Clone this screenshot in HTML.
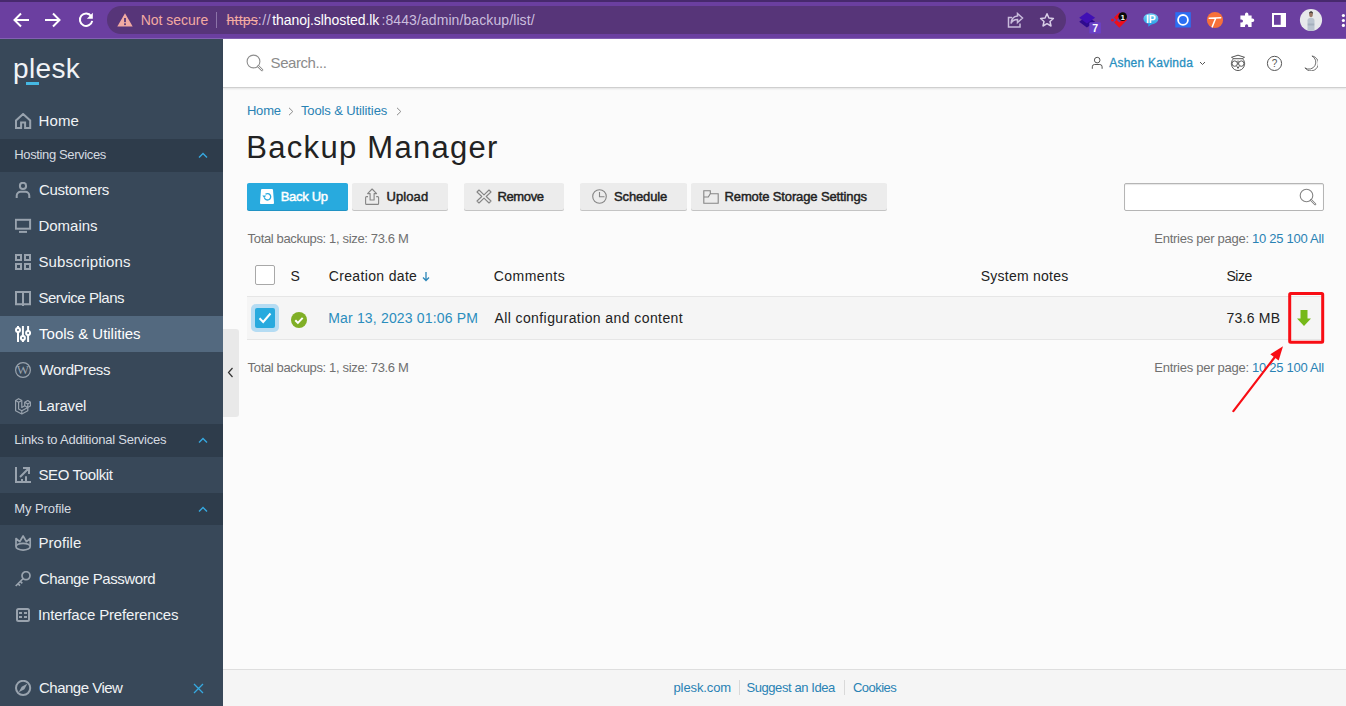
<!DOCTYPE html>
<html><head><meta charset="utf-8">
<style>
*{box-sizing:border-box;margin:0;padding:0}
html,body{width:1346px;height:706px;overflow:hidden;background:#fbfbfb;font-family:"Liberation Sans",sans-serif;}
.abs{position:absolute}
.t{position:absolute;white-space:nowrap}
#chrome{position:absolute;left:0;top:0;width:1346px;height:39px;background:#6b3fa0;}
#chrome .topstrip{position:absolute;left:0;top:0;width:1346px;height:2px;background:#47296d}
#chrome .botline{position:absolute;left:0;top:38px;width:1346px;height:1px;background:#8460b3}
#pill{position:absolute;left:107px;top:6px;width:959px;height:28px;border-radius:14px;background:#573579}
#side{position:absolute;left:0;top:39px;width:223px;height:667px;background:#384859}
.sec{position:absolute;left:0;width:223px;height:33px;background:#2e3c4b}
.act{position:absolute;left:0;width:223px;height:36px;background:#53697f}
.ic{position:absolute;fill:none;stroke:#99a3ae;stroke-width:2}
.chev{position:absolute;left:198px;fill:none;stroke:#36a9e0;stroke-width:1.4}
#hdr{position:absolute;left:223px;top:39px;width:1123px;height:49px;background:#fff;border-bottom:1px solid #cfcfcf;box-shadow:0 1px 2px rgba(0,0,0,.10)}
.btn{position:absolute;top:183px;height:27px;background:#ececec;border-radius:2px;box-shadow:0 1px 0 #c4c4c4}
.btn.pri{background:#28aade;box-shadow:none}
.gi{position:absolute;fill:none;stroke:#858585;stroke-width:1.1}
</style></head><body>

<div id="chrome">
  <div class="topstrip"></div><div class="botline"></div>
  <div id="pill"></div>
</div>
<div id="side"></div>
<div id="hdr"></div>

<!-- chrome icons -->
<svg class="abs" style="left:11px;top:11px" width="20" height="18" viewBox="0 0 20 18" fill="none" stroke="#fff" stroke-width="2"><path d="M18 9H4M10 2.500L3.500 9l6.500 6.500"/></svg>
<svg class="abs" style="left:43px;top:11px" width="20" height="18" viewBox="0 0 20 18" fill="none" stroke="#fff" stroke-width="2"><path d="M2 9h14M10 2.500L16.500 9 10 15.500"/></svg>
<svg class="abs" style="left:77px;top:11px" width="18" height="18" viewBox="0 0 18 18" fill="none" stroke="#fff" stroke-width="2"><path d="M14.200 5.200A6.200 6.200 0 1 0 15.200 9.800"/><path d="M15.800 1.800v6h-6z" fill="#fff" stroke="none"/></svg>
<svg class="abs" style="left:117px;top:13px" width="16" height="14" viewBox="0 0 16 14"><path d="M8 0.300L15.700 13.600H0.300z" fill="#f2aaa2"/><rect x="7.100" y="5" width="1.800" height="4.200" fill="#573579"/><rect x="7.100" y="10.300" width="1.800" height="1.800" fill="#573579"/></svg>
<div class="abs" style="left:216px;top:12px;width:1px;height:16px;background:#8c73a8"></div>
<!-- share -->
<svg class="abs" style="left:1007px;top:12px" width="17" height="16" viewBox="0 0 17 16" fill="none" stroke="#c9bcdc" stroke-width="1.500"><path d="M5 5.500H1.500v9.500h11.500v-3.500"/><path d="M10.500 1.500l5 4.500-5 4.500v-3c-3.500 0-5.500 1.500-6.500 4 0-4 2.500-7.500 6.500-7.500z"/></svg>
<!-- star -->
<svg class="abs" style="left:1039px;top:12px" width="16" height="16" viewBox="0 0 16 16" fill="none" stroke="#d8cde6" stroke-width="1.500" stroke-linejoin="round"><path d="M8 1.800l1.900 4.200 4.500.500-3.400 3 1 4.500L8 11.700 4 14l1-4.500-3.400-3 4.500-.500z"/></svg>
<!-- ext1 layers -->
<svg class="abs" style="left:1078px;top:11px" width="24" height="24" viewBox="0 0 24 24"><path d="M8.900 5.200L17.100 10.800 8.900 16.400 1.200 10.800z" fill="#2e0b8e"/><path d="M8.900 1.200L17.100 6.800 8.900 12.400 1.200 6.800z" fill="#4010b4"/><rect x="11.300" y="11.200" width="11.600" height="11.400" rx="1.200" fill="#6a41c6"/><text x="17.100" y="21" font-family="Liberation Sans,sans-serif" font-size="10.500" font-weight="bold" fill="#fff" text-anchor="middle">7</text></svg>
<!-- ext2 red tag -->
<svg class="abs" style="left:1110px;top:11px" width="20" height="18" viewBox="0 0 20 18"><path d="M9.300 1.200L17 8.900 9.300 16.700 4 11.300 6.400 8.900 4 6.500z" fill="#ee0f1a"/><path d="M9.300 6.300L12 8.900 9.300 11.600 6.700 8.900z" fill="#6b3fa0"/><circle cx="2.500" cy="9" r="1.600" fill="#ee0f1a"/><circle cx="12.700" cy="5.600" r="4.300" fill="#0a0a0a"/><text x="12.700" y="8.500" font-family="Liberation Sans,sans-serif" font-size="8" font-weight="bold" fill="#fff" text-anchor="middle">1</text></svg>
<!-- ext3 IP bubble -->
<svg class="abs" style="left:1142px;top:12px" width="18" height="17" viewBox="0 0 18 17"><defs><linearGradient id="ipg" x1="0" y1="0" x2="0" y2="1"><stop offset="0" stop-color="#7ad3f5"/><stop offset="1" stop-color="#2b9fe6"/></linearGradient></defs><ellipse cx="8.900" cy="6.800" rx="7.500" ry="5.600" fill="url(#ipg)"/><path d="M6.500 11.500L6.200 14.800 10 12z" fill="#2b9fe6"/><text x="8.900" y="10.600" font-family="Liberation Sans,sans-serif" font-size="10.500" font-weight="bold" fill="#fff" text-anchor="middle">IP</text></svg>
<!-- ext4 blue square -->
<svg class="abs" style="left:1175px;top:12px" width="16" height="16" viewBox="0 0 16 16"><rect x=".300" y=".200" width="15.500" height="15.300" fill="#2b6ff3"/><circle cx="8" cy="7.900" r="4.900" fill="none" stroke="#fff" stroke-width="1.800"/></svg>
<!-- ext5 orange T -->
<svg class="abs" style="left:1206px;top:11px" width="18" height="18" viewBox="0 0 18 18"><circle cx="9" cy="9" r="8.100" fill="#f6703a"/><path d="M3.200 7.300L14.700 6.800M9.800 7L6.200 15.900" stroke="#fff" stroke-width="1.500" fill="none" stroke-linecap="round"/></svg>
<!-- puzzle -->
<svg class="abs" style="left:1239px;top:12px" width="16" height="16" viewBox="0 0 16 16"><path d="M6 2.200a1.700 1.700 0 0 1 3.400 0V3.400H12.600V6.600h1a1.700 1.700 0 0 1 0 3.400h-1V14.900H9.200v-1a1.600 1.600 0 0 0-3.200 0v1H1.400V10.600h1a1.600 1.600 0 0 0 0-3.200h-1V3.400H6z" fill="#fff"/></svg>
<!-- side panel -->
<svg class="abs" style="left:1272px;top:13px" width="14" height="14" viewBox="0 0 14 14"><rect x="0" y="0" width="14" height="14" fill="#fff"/><rect x="2" y="2" width="6.700" height="9.800" fill="#6b3fa0"/></svg>
<!-- avatar -->
<svg class="abs" style="left:1299px;top:8px" width="24" height="24" viewBox="0 0 24 24"><defs><clipPath id="av"><circle cx="12" cy="12" r="11.100"/></clipPath></defs><circle cx="12" cy="12" r="11.100" fill="#e6e8eb"/><g clip-path="url(#av)"><path d="M8.500 24V12.500c0-1.800 1.300-2.800 3.500-2.800s3.500 1 3.500 2.800V24z" fill="#b9c3cf"/><ellipse cx="12" cy="6.800" rx="1.900" ry="2.400" fill="#9a7866"/><path d="M10 6c0-2 1-2.800 2.100-2.800S14.100 4 14 6c-.600-1-1.300-1.300-2-1.300S10.600 5 10 6z" fill="#2a2522"/><path d="M8.800 15.500h6.400v2H8.800z" fill="#a4afbd"/></g></svg>
<!-- menu dots -->
<svg class="abs" style="left:1340px;top:12px" width="6" height="18" viewBox="0 0 6 18" fill="#fff"><circle cx="3.400" cy="3.500" r="1.600"/><circle cx="3.400" cy="8.500" r="1.600"/><circle cx="3.400" cy="13.400" r="1.600"/></svg>

<!-- sidebar bands -->
<div class="sec" style="top:139px;height:32.5px"></div>
<div class="sec" style="top:424px;height:32.5px"></div>
<div class="sec" style="top:492.5px;height:32.5px"></div>
<div class="act" style="top:316px"></div>
<svg class="chev" style="top:150.5px" width="10" height="8" viewBox="0 0 10 8"><path d="M1 6.500l4-4 4 4"/></svg>
<svg class="chev" style="top:435.5px" width="10" height="8" viewBox="0 0 10 8"><path d="M1 6.500l4-4 4 4"/></svg>
<svg class="chev" style="top:504.5px" width="10" height="8" viewBox="0 0 10 8"><path d="M1 6.500l4-4 4 4"/></svg>
<div class="abs" style="left:26.400px;top:82.400px;width:12.400px;height:2.300px;background:#45b8e3"></div>
<!-- sidebar icons (16x16 at x=15) -->
<svg class="ic" style="left:15px;top:113px" width="17" height="17" viewBox="0 0 17 17"><path d="M1 15V7.500L8.100 1 15.200 7.500V15H10.100V9.500H6.100V15z"/></svg>
<svg class="ic" style="left:15px;top:182px" width="16" height="17" viewBox="0 0 16 17"><circle cx="8" cy="3.900" r="3.100"/><path d="M1.700 16v-2.300a4 4 0 0 1 4-4h4.600a4 4 0 0 1 4 4V16"/></svg>
<svg class="ic" style="left:15px;top:218px" width="17" height="16" viewBox="0 0 17 16"><rect x=".800" y="1.800" width="14.300" height="8.900"/><path d="M4 13.900h8"/></svg>
<svg class="ic" style="left:15px;top:254px" width="16" height="16" viewBox="0 0 16 16"><rect x="1" y="1" width="5" height="5"/><rect x="10" y="1" width="5" height="5"/><rect x="1" y="10" width="5" height="5"/><rect x="10" y="10" width="5" height="5"/></svg>
<svg class="ic" style="left:15px;top:291px" width="16" height="16" viewBox="0 0 16 16"><path d="M1 1h14v12.200H1zM8 1v14"/></svg>
<svg class="ic" style="left:15px;top:326px;stroke:#fff" width="16" height="16" viewBox="0 0 16 16"><path d="M3 0v16M7.900 0v16M13.100 0v16"/><circle cx="3" cy="4" r="2" fill="#53697f"/><circle cx="7.900" cy="12.100" r="2" fill="#53697f"/><circle cx="13.100" cy="7" r="2" fill="#53697f"/></svg>
<svg class="ic" style="left:15px;top:362px;stroke-width:1.200" width="16" height="16" viewBox="0 0 16 16"><circle cx="8" cy="8" r="7.400"/><text x="8" y="12.300" font-family="Liberation Serif,serif" font-size="13" fill="#99a3ae" stroke="none" text-anchor="middle">W</text></svg>
<svg class="ic" style="left:15px;top:398px;stroke-width:1.200;stroke-linejoin:round" width="16" height="17" viewBox="0 0 16 17"><path d="M.600 2.500L3.600.700 6.800 2.500V9.500L9.700 7.800V4.300L12.800 2.500 15.500 4.300V7.800L12.800 9.500V12.800L6.800 16 .600 12.800z"/><path d="M.600 2.500L3.600 4.300 6.800 2.500M3.600 4.300V11L6.800 12.700 12.800 9.500M9.700 4.300L12.800 6 15.500 4.300M12.800 6V9.500M6.800 12.700V16M9.700 7.800L12.800 9.500"/></svg>
<svg class="ic" style="left:15px;top:467px" width="17" height="17" viewBox="0 0 17 17"><path d="M1 0V15H16M5 10L14 1M8 1H14V7M7 14V12M11 14V9.300"/></svg>
<svg class="ic" style="left:15px;top:535px;stroke-width:1.700;stroke-linejoin:round" width="17" height="17" viewBox="0 0 17 17"><path d="M1 11.500V3.500L4.700 6.700 8.100 1 11.500 6.700 15.200 3.500V11.500"/><ellipse cx="8.100" cy="11.700" rx="7.100" ry="3.400"/></svg>
<svg class="ic" style="left:15px;top:571px;stroke-width:1.700" width="17" height="17" viewBox="0 0 17 17"><circle cx="11" cy="4.700" r="4"/><path d="M8.200 7.500L.700 15M3 12.700l2 2M5.300 10.400l2 2"/></svg>
<svg class="ic" style="left:15px;top:607px" width="16" height="16" viewBox="0 0 16 16"><rect x="2" y="2" width="12" height="12" rx="1.500"/><path d="M4 5h3v2H4zM9 5h3v2H9zM4 9h3v2H4zM9 9h3v2H9z" fill="#99a3ae" stroke="none"/></svg>
<svg class="ic" style="left:15px;top:680px" width="17" height="17" viewBox="0 0 17 17"><circle cx="8.100" cy="7.900" r="7.100"/><path d="M12.300 3.700L9.400 9.200 3.700 12.300 6.700 6.700z" fill="#99a3ae" stroke="none"/></svg>
<svg class="abs" style="left:193px;top:683px" width="11" height="11" viewBox="0 0 11 11" fill="none" stroke="#36a9e0" stroke-width="1.300"><path d="M1 1l9 9M10 1l-9 9"/></svg>
<!-- collapse handle -->
<div class="abs" style="left:223px;top:329px;width:16px;height:88px;background:#e9e9e9;border-radius:0 3px 3px 0"></div>
<svg class="abs" style="left:227px;top:367px" width="7" height="11" viewBox="0 0 7 11" fill="none" stroke="#333" stroke-width="1.200"><path d="M5.500 1L1.500 5.500l4 4.500"/></svg>

<!-- header icons -->
<svg class="gi" style="left:246px;top:54px;stroke:#8e8e8e" width="18" height="18" viewBox="0 0 18 18"><circle cx="7.500" cy="7.500" r="6.400" stroke-width="1.100"/><path d="M12.300 12.300l3.800 3.800" stroke-width="2.400" stroke-linecap="round"/><path d="M12.300 12.300l3.800 3.800" stroke="#fff" stroke-width=".900" stroke-linecap="round"/></svg>
<svg class="gi" style="left:1091px;top:56px;stroke:#555;stroke-width:1" width="13" height="14" viewBox="0 0 13 14"><circle cx="6.200" cy="4.100" r="2.800"/><path d="M1.300 12.800v-2a2.300 2.300 0 0 1 2.300-2.300h5.200a2.300 2.300 0 0 1 2.300 2.300v2"/></svg>
<svg class="gi" style="left:1199px;top:61px;stroke:#555;stroke-width:1" width="7" height="5" viewBox="0 0 7 5"><path d="M1 1l2.500 2.500L6 1"/></svg>
<svg class="gi" style="left:1230px;top:54px;stroke:#555;stroke-width:1" width="16" height="18" viewBox="0 0 16 18"><path d="M1.500 3.300L8 1.200 14.500 3.300 12.200 4.700H3.800z"/><path d="M3.500 4.800C1 7 1 10.500 2 12.500c1.200 2.700 3.500 4 6 4s4.800-1.300 6-4c1-2 1-5.500-1.500-7.700"/><circle cx="4.700" cy="9.600" r="2.700"/><circle cx="11.300" cy="9.600" r="2.700"/><path d="M6.800 12.200L8 14.400 9.200 12.200M8 6.500v4"/></svg>
<svg class="gi" style="left:1266px;top:55px;stroke:#555;stroke-width:1" width="17" height="17" viewBox="0 0 17 17"><circle cx="8.500" cy="8.400" r="7.100"/><text x="8.500" y="12" font-family="Liberation Sans,sans-serif" font-size="10" fill="#555" stroke="none" text-anchor="middle">?</text></svg>
<svg class="gi" style="left:1303.500px;top:54.500px;stroke:#555;stroke-width:.900;stroke-linejoin:round" width="14" height="16" viewBox="0 0 15 17"><path d="M8.500 1A8 8 0 1 1 1 13.700A7.400 7.400 0 1 0 8.500 1z"/></svg>

<!-- breadcrumb chevrons -->
<svg class="gi" style="left:288px;top:107px;stroke:#8a8a8a;stroke-width:1" width="6" height="9" viewBox="0 0 6 9"><path d="M1 .800l3.800 3.700L1 8.200"/></svg>
<svg class="gi" style="left:395.500px;top:107px;stroke:#8a8a8a;stroke-width:1" width="6" height="9" viewBox="0 0 6 9"><path d="M1 .800l3.800 3.700L1 8.200"/></svg>

<!-- buttons -->
<div class="btn pri" style="left:247px;width:101px;box-shadow:0 1px 0 #2193c4"></div>
<div class="btn" style="left:352px;width:95.500px"></div>
<div class="btn" style="left:464px;width:99.500px"></div>
<div class="btn" style="left:580px;width:106.500px"></div>
<div class="btn" style="left:691px;width:195.500px"></div>
<svg class="abs" style="left:260px;top:189px" width="14" height="15" viewBox="0 0 14 15"><path d="M2 0H12a1 1 0 0 1 1 .900L14 13.800a1 1 0 0 1-1 1.100H1a1 1 0 0 1-1-1.100L1 .900A1 1 0 0 1 2 0z" fill="#fff"/><path d="M4.400 8.600a3.200 3.200 0 1 0 1.100-3.300" fill="none" stroke="#28aade" stroke-width="1.300"/><path d="M2.300 6.400h3.900L4.200 9z" fill="#28aade"/></svg>
<svg class="gi" style="left:365px;top:188px" width="15" height="17" viewBox="0 0 15 17" stroke-linejoin="round"><path d="M3 8.600H1.600a1 1 0 0 0-1 1V15.400a1 1 0 0 0 1 1H12.600a1 1 0 0 0 1-1V9.600a1 1 0 0 0-1-1H11.200"/><path d="M7.100 1L11.600 5.600H9.100V12H5.100V5.600H2.600z"/></svg>
<svg class="gi" style="left:476px;top:189px" width="16" height="15" viewBox="0 0 16 15" stroke-linejoin="round"><path d="M3 1L8 5.800 13 1l2 2-4.800 4.500L15 12l-2 2-5-4.800L3 14l-2-2 4.800-4.500L1 3z"/></svg>
<svg class="gi" style="left:592px;top:189px" width="16" height="16" viewBox="0 0 16 16"><circle cx="7.500" cy="7.500" r="6.800"/><path d="M7.500 3v4.800h5"/></svg>
<svg class="gi" style="left:703px;top:190px" width="16" height="14" viewBox="0 0 16 14"><path d="M.800 13.200V.800h6.500v3h7.900v9.400zM.800 7h4.500l2-3.200"/></svg>

<!-- search box -->
<div class="abs" style="left:1124px;top:183px;width:200px;height:28px;background:#fff;border:1px solid #b5b5b5;border-radius:2px;box-shadow:inset 0 1px 1px rgba(0,0,0,.10)"></div>
<svg class="gi" style="left:1299px;top:188px" width="18" height="18" viewBox="0 0 18 18"><circle cx="7.500" cy="7.500" r="6.300"/><path d="M12 12l4.200 4.200" stroke-width="2.200" stroke-linecap="round"/><path d="M12 12l4.200 4.200" stroke="#fff" stroke-width=".700"/></svg>

<!-- table -->
<div class="abs" style="left:255px;top:265px;width:20px;height:20px;background:#fff;border:1px solid #a8a8a8;border-radius:2px"></div>
<svg class="abs" style="left:422px;top:271px" width="8" height="11" viewBox="0 0 8 11" fill="none" stroke="#2b86b8" stroke-width="1.300"><path d="M4 1v8.500M1 6.500l3 3 3-3"/></svg>
<div class="abs" style="left:247px;top:296px;width:1077px;height:44px;background:#f5f5f5;border-top:1px solid #e6e6e6;border-bottom:1px solid #e6e6e6"></div>
<div class="abs" style="left:251.300px;top:304.300px;width:27.400px;height:27.400px;background:#b5dcf3;border-radius:5px"></div>
<div class="abs" style="left:255px;top:308px;width:20px;height:20px;background:#28aade;border-radius:2px"></div>
<svg class="abs" style="left:258px;top:311px" width="14" height="14" viewBox="0 0 14 14" fill="none" stroke="#fff" stroke-width="2"><path d="M1.500 7.200l3.700 3.800L12.500 2.500"/></svg>
<svg class="abs" style="left:291px;top:312px" width="16" height="16" viewBox="0 0 16 16"><circle cx="8" cy="8" r="8" fill="#80af26"/><path d="M4.300 8.300l2.600 2.600 4.800-5" fill="none" stroke="#fff" stroke-width="2"/></svg>
<svg class="abs" style="left:1297px;top:310px" width="14" height="16" viewBox="0 0 14 16"><path d="M3.500 0h7v8.500H14L7 16 0 8.500h3.500z" fill="#76b91a"/></svg>

<!-- footer -->
<div class="abs" style="left:223px;top:669px;width:1123px;height:37px;background:#f5f5f5;border-top:1px solid #dedede"></div>
<div class="abs" style="left:739px;top:680px;width:1px;height:15px;background:#d9d9d9"></div>
<div class="abs" style="left:844px;top:680px;width:1px;height:15px;background:#d9d9d9"></div>


<div class="t" style="left:38.50px;top:110.4px;height:21px;line-height:21px;font-size:15px;font-weight:normal;color:#f0f3f5;letter-spacing:0.143px;">Home</div>
<div class="t" style="left:38.98px;top:179.2px;height:21px;line-height:21px;font-size:15px;font-weight:normal;color:#f0f3f5;letter-spacing:-0.265px;">Customers</div>
<div class="t" style="left:38.50px;top:215.4px;height:21px;line-height:21px;font-size:15px;font-weight:normal;color:#f0f3f5;letter-spacing:-0.031px;">Domains</div>
<div class="t" style="left:38.39px;top:251.4px;height:21px;line-height:21px;font-size:15px;font-weight:normal;color:#f0f3f5;letter-spacing:0.182px;">Subscriptions</div>
<div class="t" style="left:38.39px;top:287.4px;height:21px;line-height:21px;font-size:15px;font-weight:normal;color:#f0f3f5;letter-spacing:-0.457px;">Service Plans</div>
<div class="t" style="left:39.08px;top:323.4px;height:21px;line-height:21px;font-size:15px;font-weight:normal;color:#ffffff;letter-spacing:-0.014px;">Tools &amp; Utilities</div>
<div class="t" style="left:39.50px;top:359.0px;height:21px;line-height:21px;font-size:15px;font-weight:normal;color:#f0f3f5;letter-spacing:-0.364px;">WordPress</div>
<div class="t" style="left:38.50px;top:395.4px;height:21px;line-height:21px;font-size:15px;font-weight:normal;color:#f0f3f5;letter-spacing:-0.227px;">Laravel</div>
<div class="t" style="left:38.39px;top:464.3px;height:21px;line-height:21px;font-size:15px;font-weight:normal;color:#f0f3f5;letter-spacing:-0.353px;">SEO Toolkit</div>
<div class="t" style="left:38.50px;top:532.3px;height:21px;line-height:21px;font-size:15px;font-weight:normal;color:#f0f3f5;letter-spacing:0.054px;">Profile</div>
<div class="t" style="left:38.98px;top:568.1px;height:21px;line-height:21px;font-size:15px;font-weight:normal;color:#f0f3f5;letter-spacing:-0.429px;">Change Password</div>
<div class="t" style="left:38.06px;top:604.1px;height:21px;line-height:21px;font-size:15px;font-weight:normal;color:#f0f3f5;letter-spacing:-0.145px;">Interface Preferences</div>
<div class="t" style="left:38.98px;top:676.9px;height:21px;line-height:21px;font-size:15px;font-weight:normal;color:#f0f3f5;letter-spacing:-0.500px;">Change View</div>
<div class="t" style="left:14.30px;top:145.8px;height:18px;line-height:18px;font-size:13px;font-weight:normal;color:#d5dbe1;letter-spacing:-0.373px;">Hosting Services</div>
<div class="t" style="left:14.30px;top:430.5px;height:18px;line-height:18px;font-size:13px;font-weight:normal;color:#d5dbe1;letter-spacing:-0.225px;">Links to Additional Services</div>
<div class="t" style="left:14.30px;top:500.1px;height:18px;line-height:18px;font-size:13px;font-weight:normal;color:#d5dbe1;letter-spacing:-0.095px;">My Profile</div>
<div class="t" style="left:12.97px;top:48.7px;height:39px;line-height:39px;font-size:28px;font-weight:normal;color:#f1f3f6;letter-spacing:0.349px;">plesk</div>
<div class="t" style="left:140.70px;top:10.4px;height:20px;line-height:20px;font-size:14px;font-weight:normal;color:#f2aaa2;letter-spacing:-0.008px;">Not secure</div>
<div class="t" style="left:226.60px;top:10.4px;height:20px;line-height:20px;font-size:14px;font-weight:normal;color:#f2aaa2;letter-spacing:0.212px;text-decoration:line-through;">https</div>
<div class="t" style="left:257.80px;top:10.4px;height:20px;line-height:20px;font-size:14px;font-weight:normal;color:#cbbede;letter-spacing:0.610px;">://</div>
<div class="t" style="left:272.30px;top:10.4px;height:20px;line-height:20px;font-size:14px;font-weight:normal;color:#ffffff;letter-spacing:-0.069px;">thanoj.slhosted.lk</div>
<div class="t" style="left:381.40px;top:10.4px;height:20px;line-height:20px;font-size:14px;font-weight:normal;color:#cbbede;letter-spacing:0.096px;">:8443/admin/backup/list/</div>
<div class="t" style="left:270.58px;top:52.2px;height:21px;line-height:21px;font-size:15px;font-weight:normal;color:#8b8b8b;letter-spacing:-0.455px;">Search...</div>
<div class="t" style="left:1109.20px;top:54.8px;height:17px;line-height:17px;font-size:12px;font-weight:normal;color:#288fc0;letter-spacing:0.246px;-webkit-text-stroke:0.3px #288fc0;">Ashen Kavinda</div>
<div class="t" style="left:246.90px;top:101.5px;height:18px;line-height:18px;font-size:13px;font-weight:normal;color:#2982b4;letter-spacing:-0.182px;">Home</div>
<div class="t" style="left:300.89px;top:101.5px;height:18px;line-height:18px;font-size:13px;font-weight:normal;color:#2982b4;letter-spacing:-0.110px;">Tools &amp; Utilities</div>
<div class="t" style="left:246.34px;top:125.8px;height:43px;line-height:43px;font-size:31px;font-weight:normal;color:#222222;letter-spacing:1.285px;">Backup Manager</div>
<div class="t" style="left:280.70px;top:187.8px;height:18px;line-height:18px;font-size:13px;font-weight:normal;color:#ffffff;letter-spacing:-0.311px;-webkit-text-stroke:0.45px #ffffff;">Back Up</div>
<div class="t" style="left:386.54px;top:187.8px;height:18px;line-height:18px;font-size:13px;font-weight:normal;color:#222222;letter-spacing:0.087px;-webkit-text-stroke:0.45px #222222;">Upload</div>
<div class="t" style="left:497.52px;top:187.8px;height:18px;line-height:18px;font-size:13px;font-weight:normal;color:#222222;letter-spacing:-0.383px;-webkit-text-stroke:0.45px #222222;">Remove</div>
<div class="t" style="left:614.00px;top:187.8px;height:18px;line-height:18px;font-size:13px;font-weight:normal;color:#222222;letter-spacing:-0.140px;-webkit-text-stroke:0.45px #222222;">Schedule</div>
<div class="t" style="left:724.52px;top:187.8px;height:18px;line-height:18px;font-size:13px;font-weight:normal;color:#222222;letter-spacing:-0.125px;-webkit-text-stroke:0.45px #222222;">Remote Storage Settings</div>
<div class="t" style="left:247.60px;top:229.8px;height:18px;line-height:18px;font-size:13px;font-weight:normal;color:#707070;letter-spacing:-0.346px;">Total backups: 1, size: 73.6 M</div>
<div class="t" style="left:1154.30px;top:229.8px;height:18px;line-height:18px;font-size:13px;font-weight:normal;color:#707070;letter-spacing:-0.269px;">Entries per page: <span style="color:#2982b4">10 25 100 All</span></div>
<div class="t" style="left:247.60px;top:358.8px;height:18px;line-height:18px;font-size:13px;font-weight:normal;color:#707070;letter-spacing:-0.346px;">Total backups: 1, size: 73.6 M</div>
<div class="t" style="left:1154.30px;top:358.8px;height:18px;line-height:18px;font-size:13px;font-weight:normal;color:#707070;letter-spacing:-0.269px;">Entries per page: <span style="color:#2982b4">10 25 100 All</span></div>
<div class="t" style="left:290.60px;top:265.9px;height:20px;line-height:20px;font-size:14px;font-weight:normal;color:#222;letter-spacing:-1.700px;">S</div>
<div class="t" style="left:328.79px;top:265.9px;height:20px;line-height:20px;font-size:14px;font-weight:normal;color:#222;letter-spacing:0.339px;">Creation date</div>
<div class="t" style="left:493.68px;top:265.9px;height:20px;line-height:20px;font-size:14px;font-weight:normal;color:#222;letter-spacing:0.482px;">Comments</div>
<div class="t" style="left:980.65px;top:265.9px;height:20px;line-height:20px;font-size:14px;font-weight:normal;color:#222;letter-spacing:0.260px;">System notes</div>
<div class="t" style="left:1226.41px;top:265.9px;height:20px;line-height:20px;font-size:14px;font-weight:normal;color:#222;letter-spacing:-0.426px;">Size</div>
<div class="t" style="left:328.27px;top:307.8px;height:20px;line-height:20px;font-size:14px;font-weight:normal;color:#2b8dbd;letter-spacing:0.164px;">Mar 13, 2023 01:06 PM</div>
<div class="t" style="left:494.40px;top:307.8px;height:20px;line-height:20px;font-size:14px;font-weight:normal;color:#222;letter-spacing:0.415px;">All configuration and content</div>
<div class="t" style="left:1226.52px;top:307.8px;height:20px;line-height:20px;font-size:14px;font-weight:normal;color:#222;letter-spacing:0.231px;">73.6 MB</div>
<div class="t" style="left:673.48px;top:679.0px;height:18px;line-height:18px;font-size:13px;font-weight:normal;color:#2982b4;letter-spacing:-0.098px;">plesk.com</div>
<div class="t" style="left:746.43px;top:679.0px;height:18px;line-height:18px;font-size:13px;font-weight:normal;color:#2982b4;letter-spacing:-0.419px;">Suggest an Idea</div>
<div class="t" style="left:853.00px;top:679.0px;height:18px;line-height:18px;font-size:13px;font-weight:normal;color:#2982b4;letter-spacing:-0.523px;">Cookies</div>

<svg class="abs" style="left:0;top:0" width="1346" height="706" viewBox="0 0 1346 706"><rect x="1289.700" y="293.500" width="33" height="48.700" rx="1" fill="none" stroke="#f80d14" stroke-width="3"/><path d="M1233.400 411.200L1276 355.500" stroke="#f80d14" stroke-width="2.200" fill="none" stroke-linecap="round"/><path d="M1283 346.200L1270.300 354.200L1278.700 360.600z" fill="#f80d14"/></svg>

</body></html>
